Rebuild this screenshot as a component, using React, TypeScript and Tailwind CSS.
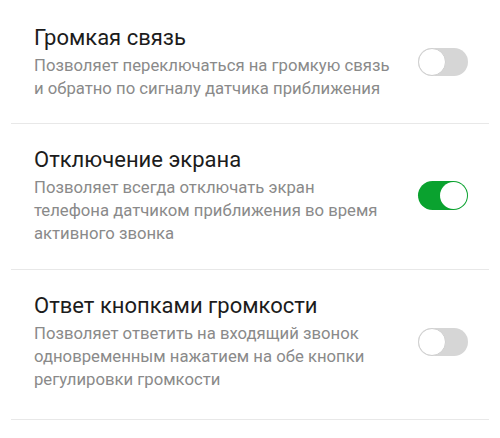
import React from "react";

type Item = { title: string; lines: string[]; on: boolean; pt: string; pb: string };

const items: Item[] = [
  {
    title: "Громкая связь",
    lines: ["Позволяет переключаться на громкую связь", "и обратно по сигналу датчика приближения"],
    on: false,
    pt: "pt-[24px]",
    pb: "pb-[23px]",
  },
  {
    title: "Отключение экрана",
    lines: ["Позволяет всегда отключать экран", "телефона датчиком приближения во время", "активного звонка"],
    on: true,
    pt: "pt-[22px]",
    pb: "pb-[24px]",
  },
  {
    title: "Ответ кнопками громкости",
    lines: ["Позволяет ответить на входящий звонок", "одновременным нажатием на обе кнопки", "регулировки громкости"],
    on: false,
    pt: "pt-[22px]",
    pb: "pb-[28px]",
  },
];

function Toggle({ on }: { on: boolean }) {
  if (on) {
    return (
      <div className="relative w-[50px] h-[29px] rounded-full bg-[#0aa22f] shrink-0">
        <div className="absolute right-[1px] top-[1px] w-[27px] h-[27px] rounded-full bg-white" />
      </div>
    );
  }
  return (
    <div className="relative w-[50px] h-[28px] rounded-full bg-[#d6d6d6] shrink-0">
      <div className="absolute left-0 top-0 w-[28px] h-[28px] rounded-full bg-white border border-[#cfcfcf]" />
    </div>
  );
}

export default function App() {
  return (
    <div
      className="w-[500px] h-[438px] bg-white overflow-hidden"
      style={{ fontFamily: "Roboto, 'Noto Sans', sans-serif" }}
    >
      <div className="mx-[11px]">
        {items.map((it, i) => (
          <div
            key={i}
            className={`flex items-center justify-between pl-[23px] pr-[21px] border-b border-[#e8e8e8] ${it.pt} ${it.pb}`}
          >
            <div className="flex flex-col">
              <div className="text-[22px] leading-[28px] text-[#1c1c1c]">{it.title}</div>
              <div className="mt-[2px] text-[16.7px] leading-[23px] text-[#8a8a8a]">
                {it.lines.map((l, j) => (
                  <div key={j} className="whitespace-nowrap">
                    {l}
                  </div>
                ))}
              </div>
            </div>
            <Toggle on={it.on} />
          </div>
        ))}
      </div>
    </div>
  );
}
